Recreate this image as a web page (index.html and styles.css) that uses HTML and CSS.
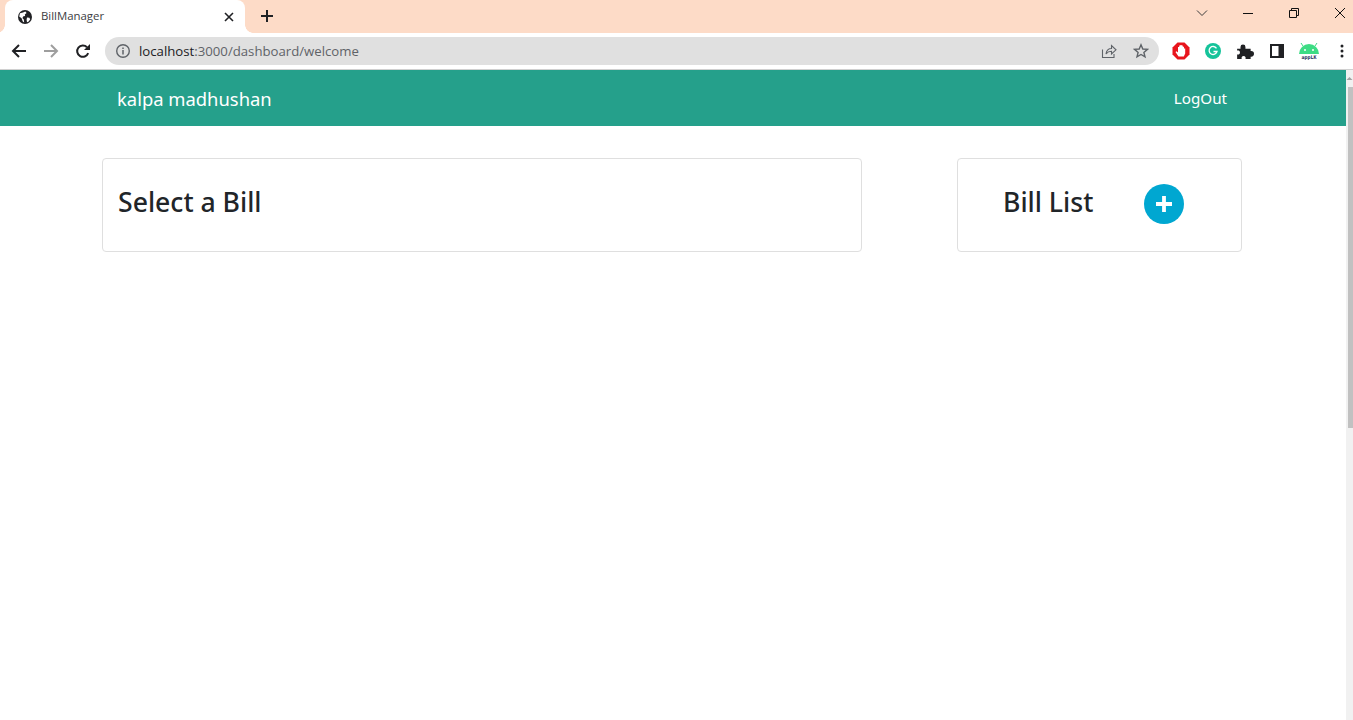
FILE: index.html
```html
<!DOCTYPE html>
<html lang="en">
<head>
<meta charset="utf-8">
<title>BillManager</title>
<link rel="stylesheet" href="styles.css">
</head>
<body>
<div class="tabstrip">
  <div class="tab">
    <svg class="favicon" width="14" height="14" viewBox="0 0 14 14"><circle cx="7" cy="7" r="7" fill="#202124"/><path d="M2 3.2 5 2.4 7.3 1.4 8.6 3 6.8 4.6 7.2 6 5.4 6.2 4.4 8 5.8 9.4 6.2 12.6 4.8 11.6 3.6 8.2 1.2 6.6ZM9 7.4 11.4 7.8 12.2 9.4 10.4 11.8 9 12.2 8.6 9.8Z" fill="#fff"/></svg>
    <span class="tab-title">BillManager</span>
    <svg class="tab-close" width="10" height="10" viewBox="0 0 10 10"><path d="M1 1 9 9M9 1 1 9" stroke="#202124" stroke-width="1.6"/></svg>
  </div>
  <svg class="new-tab" width="14" height="14" viewBox="0 0 14 14"><path d="M7 1V13M1 7H13" stroke="#202124" stroke-width="2"/></svg>
  <div class="window-controls">
    <svg width="12" height="12" viewBox="0 0 12 12"><path d="M1 3.5 6 8.5 11 3.5" fill="none" stroke="#3c3c3c" stroke-width="1"/></svg>
    <svg width="12" height="12" viewBox="0 0 12 12"><path d="M1 6.5H11" stroke="#111" stroke-width="1"/></svg>
    <svg width="12" height="12" viewBox="0 0 12 12"><path d="M1.5 3.5H8.5V10.5H1.5ZM3.5 3.5V1.5H10.5V8.5H8.5" fill="none" stroke="#111" stroke-width="1"/></svg>
    <svg width="12" height="12" viewBox="0 0 12 12"><path d="M1 1 11 11M11 1 1 11" stroke="#111" stroke-width="1"/></svg>
  </div>
</div>
<div class="toolbar">
  <div class="nav-buttons">
    <svg width="16" height="16" viewBox="0 0 16 16"><path d="M15 8H2M8 2 2 8 8 14" fill="none" stroke="#202124" stroke-width="2"/></svg>
    <svg width="16" height="16" viewBox="0 0 16 16"><path d="M1 8H14M8 2 14 8 8 14" fill="none" stroke="#9e9e9e" stroke-width="2"/></svg>
    <svg width="16" height="16" viewBox="0 0 16 16"><path d="M13.2 10.2A5.7 5.7 0 1 1 12 4.2" fill="none" stroke="#202124" stroke-width="2"/><path d="M15 1V7H9Z" fill="#202124"/></svg>
  </div>
  <div class="omnibox">
    <svg class="info" width="16" height="16" viewBox="0 0 16 16"><circle cx="8" cy="8" r="6.3" fill="none" stroke="#5f6368" stroke-width="1.4"/><path d="M8 7V11.5M8 4.4V5.9" stroke="#5f6368" stroke-width="1.5"/></svg>
    <span class="url"><span class="host">localhost</span>:3000/dashboard/welcome</span>
    <svg class="share" width="16" height="16" viewBox="0 0 16 16"><path d="M1.5 6.5V14.5H13V11M5 11C5.5 7.5 8 5.5 10.5 5.5V2.5L15 6.8 10.5 11V8.3C8 8.3 6.5 9 5 11Z" fill="none" stroke="#5f6368" stroke-width="1.1"/></svg>
    <svg class="star" width="16" height="16" viewBox="0 0 16 16"><path d="M8 1.8 9.8 6 14.4 6.4 10.9 9.4 12 13.9 8 11.5 4 13.9 5.1 9.4 1.6 6.4 6.2 6Z" fill="none" stroke="#5f6368" stroke-width="1.4"/></svg>
  </div>
  <div class="extensions">
    <svg width="18" height="18" viewBox="0 0 18 18"><path d="M5.5 0.500H12.5L17.500 5.500V12.500L12.500 17.500H5.500L0.500 12.500V5.500Z" fill="#e8141c"/><path d="M6.500 14.500 3.500 10 4.600 9.200 6 10.400V5H7.200V3.400H8.400V3H9.600V3.500H10.800V4.800H12V6.400H13.200V11.500L11.800 14.500Z" fill="#fff"/></svg>
    <svg width="16" height="16" viewBox="0 0 16 16"><circle cx="8" cy="8" r="8" fill="#15c39a"/><path d="M11.500 5.300A4 4 0 1 0 12 8.500H8.500" fill="none" stroke="#fff" stroke-width="1.300"/></svg>
    <svg width="18" height="18" viewBox="0 0 16 16"><path d="M1 6H4V4.500A2.200 2.200 0 0 1 8.400 4.500V6H13V8H13.500A2.500 2.500 0 0 1 13.500 13H13V15H8.500V13.500A2 2 0 0 0 5 13.500V15H1V11H2.500A2 2 0 0 0 2.500 7.500H1Z" fill="#202124"/></svg>
    <svg width="14" height="14" viewBox="0 0 14 14"><path d="M0 0H14V14H0ZM2 2V12H8.500V2Z" fill="#202124" fill-rule="evenodd"/></svg>
    <div class="android">
      <svg width="22" height="12" viewBox="0 0 22 12"><path d="M1 12A10 10 0 0 1 21 12Z" fill="#3ddc84"/><path d="M5 4 3 1M17 4 19 1" stroke="#3ddc84" stroke-width="1"/><circle cx="7" cy="8" r="1" fill="#fff"/><circle cx="15" cy="8" r="1" fill="#fff"/></svg>
      <span class="android-label">appLK</span>
    </div>
    <svg width="4" height="14" viewBox="0 0 4 14"><circle cx="2" cy="2" r="1.500" fill="#202124"/><circle cx="2" cy="7" r="1.500" fill="#202124"/><circle cx="2" cy="12" r="1.500" fill="#202124"/></svg>
  </div>
</div>
<div class="viewport">
  <div class="page">
    <nav class="navbar">
      <span class="brand">kalpa madhushan</span>
      <a class="logout">LogOut</a>
    </nav>
    <main class="content">
      <section class="card card-main"><h3 class="card-title">Select a Bill</h3></section>
      <section class="card card-side">
        <h3 class="card-title">Bill List</h3>
        <button class="add-btn" type="button" aria-label="Add bill"><svg width="16" height="16" viewBox="0 0 16 16"><path d="M8 0V16M0 8H16" stroke="#fff" stroke-width="3.800"/></svg></button>
      </section>
    </main>
  </div>
  <div class="scrollbar">
    <div class="scroll-btn"><svg width="7" height="5" viewBox="0 0 7 5"><path d="M3.500 1 6.500 4H.5Z" fill="#a3a3a3"/></svg></div>
    <div class="scroll-thumb"></div>
  </div>
</div>
</body>
</html>
```
FILE: styles.css
```css
* { box-sizing: border-box; }
html, body { margin: 0; height: 720px; overflow: hidden; }
body {
  width: 1353px;
  display: flex;
  flex-direction: column;
  background: #fff;
  font-family: "Noto Sans", "Open Sans", sans-serif;
}

.tabstrip {
  height: 33px;
  flex: none;
  display: flex;
  background: #fddbc7;
}
.tab {
  position: relative;
  width: 240px;
  margin-left: 5px;
  padding: 0 11px 0 13px;
  display: flex;
  align-items: center;
  background: #fff;
  border-radius: 8px 8px 0 0;
}
.tab::before, .tab::after {
  content: "";
  position: absolute;
  bottom: 0;
  width: 8px;
  height: 8px;
}
.tab::before { left: -8px; background: radial-gradient(circle at 0 0, transparent 7.500px, #fff 8px); }
.tab::after { right: -8px; background: radial-gradient(circle at 100% 0, transparent 7.500px, #fff 8px); }
.favicon { flex: none; }
.tab-title {
  margin: -2px 0 0 9px;
  flex: 1;
  font-family: "Open Sans", sans-serif;
  font-size: 11.400px;
  color: #3c4043;
}
.tab-close { flex: none; }
.new-tab { flex: none; margin: 9px 0 0 15px; }
.window-controls {
  margin-left: auto;
  padding: 7px 7px 0 0;
  display: flex;
  align-items: flex-start;
  gap: 34px;
}

.toolbar {
  height: 37px;
  flex: none;
  display: flex;
  align-items: center;
  padding: 0 0 1px 11px;
  background: #fff;
  border-bottom: 1px solid #d0d0d0;
}
.nav-buttons { display: flex; gap: 16px; width: 94px; flex: none; }
.omnibox {
  width: 1054px;
  height: 28px;
  flex: none;
  display: flex;
  align-items: center;
  padding: 0 10px;
  border-radius: 14px;
  background: #e0e0e0;
}
.info { flex: none; }
.url {
  flex: 1;
  margin-left: 8px;
  font-family: "Open Sans", sans-serif;
  font-size: 13.200px;
  color: #5f6368;
}
.host { color: #202124; }
.share { flex: none; margin-right: 16px; }
.star { flex: none; margin-right: 0; }
.extensions {
  flex: 1;
  display: flex;
  align-items: center;
  padding-left: 13px;
}
.extensions > svg, .android { flex: none; }
.extensions > :nth-child(1) { margin-right: 15px; }
.extensions > :nth-child(2) { margin-right: 15px; }
.extensions > :nth-child(3) { margin-right: 16px; }
.extensions > :nth-child(4) { margin-right: 14px; }
.extensions > :nth-child(5) { margin-right: 20px; }
.android { width: 22px; display: flex; flex-direction: column; align-items: center; }
.android-label {
  font-family: "DejaVu Sans Mono", monospace;
  font-size: 5px;
  line-height: 6px;
  font-weight: 700;
  color: #1a2a55;
}

.viewport { flex: 1; display: flex; min-height: 0; }
.page { flex: 1; min-width: 0; }
.navbar {
  height: 56px;
  display: flex;
  align-items: center;
  justify-content: space-between;
  padding: 0 119px 0 117px;
  background: #25a08b;
  color: #fff;
}
.brand { font-size: 18.400px; margin-top: 1px; }
.logout { font-size: 15.200px; }
.content {
  display: flex;
  align-items: flex-start;
  gap: 95px;
  padding: 32px 0 0 102px;
}
.card {
  height: 94px;
  display: flex;
  align-items: flex-start;
  background: #fff;
  border: 1px solid #dfdfdf;
  border-radius: 4px;
}
.card-main { width: 760px; padding: 23px 15px; }
.card-side { width: 285px; padding: 23px 0 0 45px; }
.card-title {
  margin: 0;
  font-size: 26.600px;
  line-height: 40px;
  font-weight: 500;
  color: #212529;
}
.add-btn {
  width: 40px;
  height: 40px;
  margin: 2px 0 0 51px;
  padding: 0;
  display: flex;
  align-items: center;
  justify-content: center;
  border: 0;
  border-radius: 50%;
  background: #00a7d1;
}

.scrollbar {
  width: 7px;
  flex: none;
  display: flex;
  flex-direction: column;
  background: #f1f1f1;
}
.scroll-btn { height: 17px; display: flex; justify-content: flex-end; padding-top: 6px; }
.scroll-thumb { width: 5px; height: 341px; margin-left: 2px; background: #c1c1c1; }
```
